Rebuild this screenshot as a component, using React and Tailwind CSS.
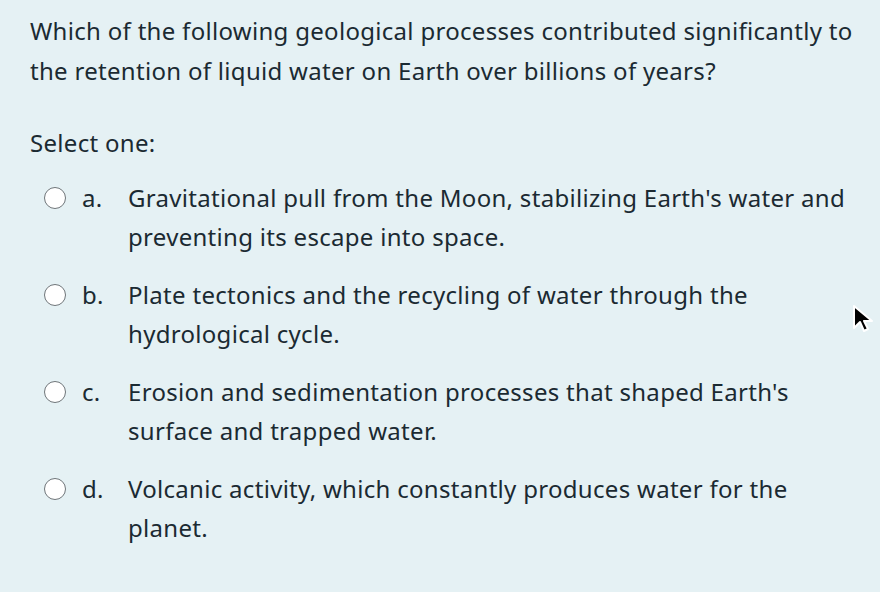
import React from "react";

const options = [
  { l: "a.", t: ["Gravitational pull from the Moon, stabilizing Earth's water and", "preventing its escape into space."] },
  { l: "b.", t: ["Plate tectonics and the recycling of water through the", "hydrological cycle."] },
  { l: "c.", t: ["Erosion and sedimentation processes that shaped Earth's", "surface and trapped water."] },
  { l: "d.", t: ["Volcanic activity, which constantly produces water for the", "planet."] },
];

export default function App() {
  return (
    <div className="relative w-[880px] h-[592px] bg-[#e5f1f4] text-[#1b2a32] overflow-hidden" style={{ fontFamily: "'Noto Sans', sans-serif" }}>
      <div className="pl-[30px] pt-[11px] text-[24px] leading-[40px] tracking-[0.3px]">
        <p className="whitespace-nowrap">Which of the following geological processes contributed significantly to</p>
        <p>the retention of liquid water on Earth over billions of years?</p>
        <p className="mt-[32px]">Select one:</p>
        <div className="mt-[15px] flex flex-col gap-[19px]">
          {options.map((o) => (
            <div key={o.l} className="flex items-start">
              <div className="w-[52px] pl-[14px] pt-[9px]">
                <span className="block w-[22px] h-[22px] rounded-full bg-white border-[1.5px] border-[#6f7579]" />
              </div>
              <span className="w-[46px]">{o.l}</span>
              <div className="leading-[39px] whitespace-nowrap">
                {o.t.map((x) => (
                  <p key={x}>{x}</p>
                ))}
              </div>
            </div>
          ))}
        </div>
      </div>
      <svg className="absolute left-[852px] top-[304px]" width="24" height="30" viewBox="0 0 24 30">
        <path d="M2 2 L2 24 L8 18 L12 27 L16 25 L12 17 L20 17 Z" fill="#000" stroke="#fff" strokeWidth="2" strokeLinejoin="round" />
      </svg>
    </div>
  );
}
